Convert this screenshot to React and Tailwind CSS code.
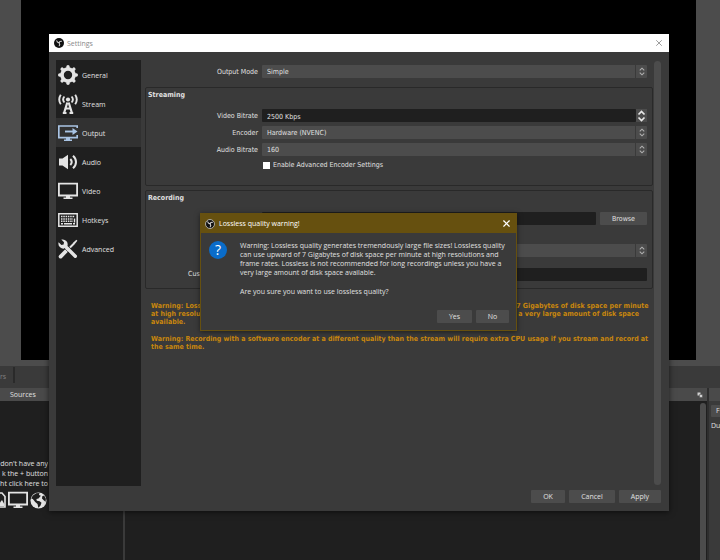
import { useState } from "react";
import { X } from "lucide-react";

const FIELD = "h-[13px] w-full min-w-0 rounded-[1px] px-[5px] pt-[2px] text-[7px] leading-[11px] outline-none";
const BUTTON = "h-[13px] rounded-[1px] bg-[#4c4c4c] pt-px text-center text-[7px] leading-[12px] text-[#e0e0e0]";

const SECTIONS = [
  { name: "General", icon: GearIcon },
  { name: "Stream", icon: AntennaIcon },
  { name: "Output", icon: OutputIcon },
  { name: "Audio", icon: SpeakerIcon },
  { name: "Video", icon: MonitorIcon },
  { name: "Hotkeys", icon: KeyboardIcon },
  { name: "Advanced", icon: ToolsIcon },
];

export default function App() {
  return (
    <div className="relative h-screen overflow-hidden bg-[#1f1f1f] font-['Open_Sans','Noto_Sans',sans-serif] text-[7px] text-[#e0e0e0]">
      <MainWindow />
      <SettingsWindow />
      <LosslessDialog />
    </div>
  );
}

function MainWindow() {
  return (
    <div className="flex h-full flex-col">
      <div className="flex flex-1 bg-[#4c4c4c] pr-6 pb-[6px] pl-[21px]">
        <div className="flex-1 bg-black" />
      </div>
      <div className="flex h-[22px] items-start bg-[#3a3a3a] pt-px">
        <div className="h-4 w-[15px] border-r-2 border-[#2a2a2a] pt-px text-[7px] leading-[18px] text-[#808080]">rs</div>
      </div>
      <div className="flex h-[172px] gap-[2px] bg-[#2e2e2e]">
        <div className="flex flex-1 flex-col">
          <div className="flex h-[13px] items-center justify-between bg-[#4a4a4a] pr-1 pl-[10px]">
            <span className="pt-px leading-[12px]">Sources</span>
            <PopoutIcon />
          </div>
          <div className="flex flex-1 bg-[#1f1f1f]">
            <div className="flex w-[123px] flex-col pt-[58px]">
              <div className="flex w-12 flex-col items-end overflow-hidden leading-[10px] whitespace-nowrap">
                <p>don't have any</p>
                <p>k the + button</p>
                <p>ht click here to</p>
              </div>
              <div className="flex h-[18px] w-12 items-center gap-[2px] pt-1">
                <ImageIcon />
                <MonitorIcon />
                <GlobeIcon />
              </div>
            </div>
            <div className="w-[2px] bg-[#3a3a3a]" />
            <div className="flex flex-1 justify-end pt-[2px] pr-px">
              <div className="w-[6px] rounded-t-full bg-[#4c4c4c]" />
            </div>
          </div>
        </div>
        <div className="flex w-[11px] flex-col overflow-hidden bg-[#3a3a3a]">
          <div className="h-[13px] shrink-0 bg-[#4a4a4a]" />
          <div className="flex flex-col gap-1 pt-1 pl-[2px]">
            <button type="button" className="h-3 w-6 rounded-[1px] bg-[#4c4c4c] pl-[5px] text-left text-[7px] leading-3">F</button>
            <span className="leading-[10px]">Du</span>
          </div>
        </div>
      </div>
    </div>
  );
}

function SettingsWindow() {
  const [section, setSection] = useState("Output");

  return (
    <div className="absolute top-[34px] right-[51px] left-[49px] flex flex-col bg-[#3a3a3a] shadow-[0_1px_6px_rgba(0,0,0,0.6)]">
      <header className="flex h-[18px] items-center gap-[3px] bg-white pr-[5px] pl-[5px] text-[#8a8a8a]">
        <ObsLogo />
        <span className="flex-1 pt-px leading-[17px]">Settings</span>
        <button type="button" aria-label="Close settings">
          <X size={10} strokeWidth={2} />
        </button>
      </header>

      <div className="flex pt-2 pr-2 pl-[7px]">
        <nav className="flex min-h-[426px] w-[85px] shrink-0 flex-col bg-[#1f1f1f]">
          {SECTIONS.map(({ name, icon: Icon }) => (
            <button
              key={name}
              type="button"
              onClick={() => setSection(name)}
              className={`flex h-[29px] items-center gap-[4px] pl-[2px] text-left leading-[10px] ${section === name ? "bg-[#313131]" : ""}`}
            >
              <Icon />
              <span className="pt-[2px]">{name}</span>
            </button>
          ))}
        </nav>

        <OutputPage />

        <div className="my-px ml-px w-[7px] shrink-0 rounded-full bg-[#4c4c4c]" />
      </div>

      <footer className="flex justify-end gap-1 pt-1 pr-2 pb-2">
        <button type="button" className={`${BUTTON} w-[34px]`}>OK</button>
        <button type="button" className={`${BUTTON} w-[46px]`}>Cancel</button>
        <button type="button" className={`${BUTTON} w-[42px]`}>Apply</button>
      </footer>
    </div>
  );
}

function OutputPage() {
  return (
    <div className="flex min-w-0 flex-1 flex-col pl-1 font-['DejaVu_Sans_Condensed','DejaVu_Sans',sans-serif]">
      <div className="pt-[5px] pr-[6px] pb-[9px] pl-px">
        <Row label="Output Mode" id="mode">
          <Select id="mode" value="Simple" />
        </Row>
      </div>

      <Group title="Streaming">
        <div className="flex flex-col gap-1 pt-[9px]">
          <Row label="Video Bitrate" id="video-bitrate">
            <div className="flex">
              <input id="video-bitrate" defaultValue="2500 Kbps" className={`${FIELD} bg-[#1f1f1f]`} />
              <span className="flex w-[11px] items-center justify-center bg-[#4c4c4c]">
                <Arrows className="h-3 w-[9px]" bright />
              </span>
            </div>
          </Row>
          <Row label="Encoder" id="encoder">
            <Select id="encoder" value="Hardware (NVENC)" />
          </Row>
          <Row label="Audio Bitrate" id="audio-bitrate">
            <Select id="audio-bitrate" value="160" />
          </Row>
          <label className="ml-[117px] flex items-center gap-[3px] leading-[10px]">
            <input type="checkbox" className="size-[7px] appearance-none bg-white checked:bg-[#6a9fd8]" />
            Enable Advanced Encoder Settings
          </label>
        </div>
      </Group>

      <div className="h-1" />

      <Group title="Recording">
        <div className="flex flex-col pt-[9px]">
          <Row label="" id="path">
            <div className="flex gap-1">
              <input id="path" aria-label="Recording Path" className={`${FIELD} bg-[#1f1f1f]`} />
              <button type="button" className={`${BUTTON} w-[47px] shrink-0`}>Browse</button>
            </div>
          </Row>
          <div className="mt-[19px]">
            <Row label="" id="quality">
              <Select id="quality" value="" />
            </Row>
          </div>
          <div className="mt-[11px] grid grid-cols-[42px_1fr] items-center">
            <label htmlFor="muxer" className="leading-[13px]"><span className="pl-[42px]">Cus</span></label>
            <div className="pl-[74px]">
              <input id="muxer" className={`${FIELD} bg-[#1f1f1f]`} />
            </div>
          </div>
        </div>
      </Group>

      <div className="flex flex-col gap-[9px] pt-[13px] pl-[6px] text-[7px] leading-[8px] font-bold text-[#c8860d]">
        <p>
          Warning: Lossless quality generates tremendously large file sizes! Lossless quality can use upward of 7 Gigabytes of disk space per minute
          at high resolutions and frame rates. Lossless is not recommended for long recordings unless you have a very large amount of disk space
          available.
        </p>
        <p>
          Warning: Recording with a software encoder at a different quality than the stream will require extra CPU usage if you stream and record at
          the same time.
        </p>
      </div>
    </div>
  );
}

function Group({ title, children }) {
  return (
    <section className="h-[99px] rounded-[2px] border border-[#292929] pt-[2px] pr-[5px]">
      <h2 className="pl-[2px] text-[7px] leading-[10px] font-bold">{title}</h2>
      {children}
    </section>
  );
}

function Row({ label, id, children }) {
  return (
    <div className="grid grid-cols-[112px_1fr] items-center gap-1">
      {label ? <label htmlFor={id} className="pt-[2px] text-right leading-[11px]">{label}</label> : <span />}
      {children}
    </div>
  );
}

function Select({ id, value }) {
  return (
    <div className="relative">
      <select id={id} aria-label={id} defaultValue={value} className={`${FIELD} block appearance-none bg-[#4c4c4c]`}>
        <option value={value}>{value}</option>
      </select>
      <span className="pointer-events-none absolute inset-y-0 right-0 flex w-3 items-center justify-center border-l border-[#3a3a3a]">
        <Arrows className="h-[9px] w-[6px]" />
      </span>
    </div>
  );
}

function LosslessDialog() {
  const [open, setOpen] = useState(true);
  if (!open) return null;

  return (
    <div role="dialog" aria-label="Lossless quality warning!" className="absolute top-[213px] right-[203px] left-[200px] flex flex-col border border-[#66500f] bg-[#3a3a3a] shadow-[0_1px_5px_rgba(0,0,0,0.5)]">
      <header className="flex h-[19px] items-center gap-1 bg-[#66500f] pr-[4px] pl-[4px] text-white">
        <ObsLogo ring />
        <span className="flex-1 leading-[19px]">Lossless quality warning!</span>
        <button type="button" aria-label="Close" onClick={() => setOpen(false)}>
          <X size={11} strokeWidth={2.5} />
        </button>
      </header>
      <div className="flex gap-[13px] px-2 pt-[8px]">
        <span className="flex size-[18px] shrink-0 items-center justify-center rounded-full bg-[#0a6cc9] text-[14px] leading-[18px] text-white">?</span>
        <div className="flex flex-1 flex-col gap-[10px] leading-[9px]">
          <p>
            Warning: Lossless quality generates tremendously large file sizes! Lossless quality
            <br />
            can use upward of 7 Gigabytes of disk space per minute at high resolutions and
            <br />
            frame rates. Lossless is not recommended for long recordings unless you have a
            <br />
            very large amount of disk space available.
          </p>
          <p>Are you sure you want to use lossless quality?</p>
        </div>
      </div>
      <div className="flex justify-end gap-1 pt-[14px] pr-[7px] pb-[7px]">
        <button type="button" onClick={() => setOpen(false)} className={`${BUTTON} w-[35px]`}>Yes</button>
        <button type="button" onClick={() => setOpen(false)} className={`${BUTTON} w-[33px]`}>No</button>
      </div>
    </div>
  );
}

function Arrows({ className, bright }) {
  return (
    <svg viewBox="0 0 8 12" className={className} fill="none" stroke={bright ? "#e8e8e8" : "#b0b0b0"} strokeWidth={bright ? 1.7 : 1.4}>
      <path d="M1 4.5 4 1.5l3 3M1 7.5l3 3 3-3" />
    </svg>
  );
}

function ObsLogo({ ring }) {
  return (
    <svg viewBox="0 0 20 20" className="size-[10px] shrink-0">
      <circle cx="10" cy="10" r={ring ? 9 : 10} fill="#111" stroke={ring ? "#ddd" : "none"} strokeWidth="1.4" />
      <g fill="none" stroke="#d8d8d8" strokeWidth="2.2" strokeLinecap="round">
        <path d="M5.5 5.5c.3 2.500 2 3.700 4.500 4" />
        <path d="M15 6.500c-2.500-.5-4.300.8-5 3" />
        <path d="M10.500 15.500c1.500-1.800 1.200-4-.5-6" />
      </g>
    </svg>
  );
}

function GearIcon() {
  return (
    <svg viewBox="0 0 20 20" className="size-5 shrink-0" stroke="#e4e4e4" fill="none">
      <circle cx="10" cy="10" r="6" strokeWidth="3.600" />
      {[0, 45, 90, 135, 180, 225, 270, 315].map((deg) => (
        <path key={deg} d="M10 3.500V1.700" strokeWidth="3.400" strokeLinecap="round" transform={`rotate(${deg} 10 10)`} />
      ))}
    </svg>
  );
}

function AntennaIcon() {
  return (
    <svg viewBox="0 0 20 20" className="size-5 shrink-0" stroke="#e4e4e4" fill="none">
      <circle cx="10" cy="5.500" r="2.100" fill="#e4e4e4" stroke="none" />
      <path d="M6.400 2.500a4.600 4.600 0 0 0 0 6M13.600 2.500a4.600 4.600 0 0 1 0 6M2.800.8a8.400 8.400 0 0 0 0 9.400M17.200.8a8.400 8.400 0 0 1 0 9.400" strokeWidth="1.900" />
      <path d="M9.300 8.500 6 19.300M10.700 8.500 14 19.300" strokeWidth="2.200" />
      <path d="M8 14.500h4M4.800 19h3.700M11.500 19h3.700" strokeWidth="1.900" />
    </svg>
  );
}

function OutputIcon() {
  return (
    <svg viewBox="0 0 20 20" className="size-5 shrink-0" fill="none" stroke="#a9c4e4">
      <path d="M19.200 5V3H.8v11.600h18.400V12" strokeWidth="1.700" />
      <path d="M7 8.500h9" strokeWidth="1.900" />
      <path d="M14.500 5 19.500 8.500l-5 3.500z" fill="#a9c4e4" stroke="none" />
      <path d="M8 14.500h4v2h2V18H6v-1.500h2z" fill="#a9c4e4" stroke="none" />
    </svg>
  );
}

function SpeakerIcon() {
  return (
    <svg viewBox="0 0 20 20" className="size-5 shrink-0" fill="none" stroke="#e4e4e4">
      <path d="M1 6.500h3.500L10 2.800v14.400L4.500 13.500H1z" fill="#e4e4e4" stroke="none" />
      <path d="M12.300 7c1.700 1.800 1.700 4.200 0 6M15 3.800c4 3.600 4 8.800 0 12.400" strokeWidth="2" />
    </svg>
  );
}

function MonitorIcon() {
  return (
    <svg viewBox="0 0 20 20" className="size-5 shrink-0" fill="none" stroke="#e4e4e4">
      <path d="M.9 2.700h18.200v11.800H.9z" strokeWidth="1.800" />
      <path d="M8 14.500h4v2h2.500V18h-9v-1.500H8z" fill="#e4e4e4" stroke="none" />
    </svg>
  );
}

function KeyboardIcon() {
  return (
    <svg viewBox="0 0 20 20" className="size-5 shrink-0" fill="none" stroke="#e4e4e4">
      <path d="M.8 3.800h18.400v12.400H.8z" strokeWidth="1.500" />
      <path d="M3 6.500h14M3 9h12M3 11.300h12" strokeWidth="1.500" strokeDasharray="1.500 .8" />
      <path d="M3 13.800h2M6 13.800h8M15 13.800h2M16.500 8.500v4" strokeWidth="1.400" />
    </svg>
  );
}

function ToolsIcon() {
  return (
    <svg viewBox="0 0 20 20" className="size-5 shrink-0" fill="none" stroke="#e4e4e4">
      <path d="M7.500 7.500 17.300 17.300" strokeWidth="3.400" strokeLinecap="round" />
      <path d="M3.300.6a5 5 0 0 1 6 6.600L7.200 9.300A5 5 0 0 1 .6 3.300l2.800 2.600 2.200-.4.400-2.200z" fill="#e4e4e4" stroke="none" />
      <path d="M12 8.500 16.500 4" strokeWidth="2" />
      <path d="M15.300 3.400 18.400.8l1 1-2.600 3.100z" fill="#e4e4e4" stroke="none" />
      <path d="M9.800 10.200 2.600 17.600" strokeWidth="3.800" strokeLinecap="round" />
      <path d="M6.100 9.100 11.500 14.500" stroke="#1f1f1f" strokeWidth=".6" />
    </svg>
  );
}

function ImageIcon() {
  return (
    <svg viewBox="0 0 6 18" className="h-[18px] w-[6px] shrink-0" fill="none" stroke="#e4e4e4">
      <path d="M0 2h2l3 3.500V16H0" strokeWidth="1.600" />
      <path d="M0 11.500 2 9l2.500 4.500V15H0z" fill="#e4e4e4" stroke="none" />
    </svg>
  );
}

function GlobeIcon() {
  return (
    <svg viewBox="0 0 18 18" className="size-[17px] shrink-0">
      <circle cx="9" cy="9" r="8.500" fill="#e4e4e4" />
      <path d="M6.500 1.200 10 1l-.5 2.200 2 .8-2.500 3-2.200.3.400 2 3 .4 2 1.800-1.200 3-2.200 2.300-.8-4-2.500-2.300L3 7.500 1.300 7l1.500-3zM13 4.500l2-.8 1.800 3.500-.3 3-2-1.400-1.800-2z" fill="#1f1f1f" />
    </svg>
  );
}

function PopoutIcon() {
  return (
    <svg viewBox="0 0 6 6" className="size-[6px]" fill="#d0d0d0">
      <path d="M.5.5h3v3h-3z" />
      <path d="M2.500 2.500h3v3h-3z" stroke="#4a4a4a" strokeWidth=".5" />
    </svg>
  );
}
